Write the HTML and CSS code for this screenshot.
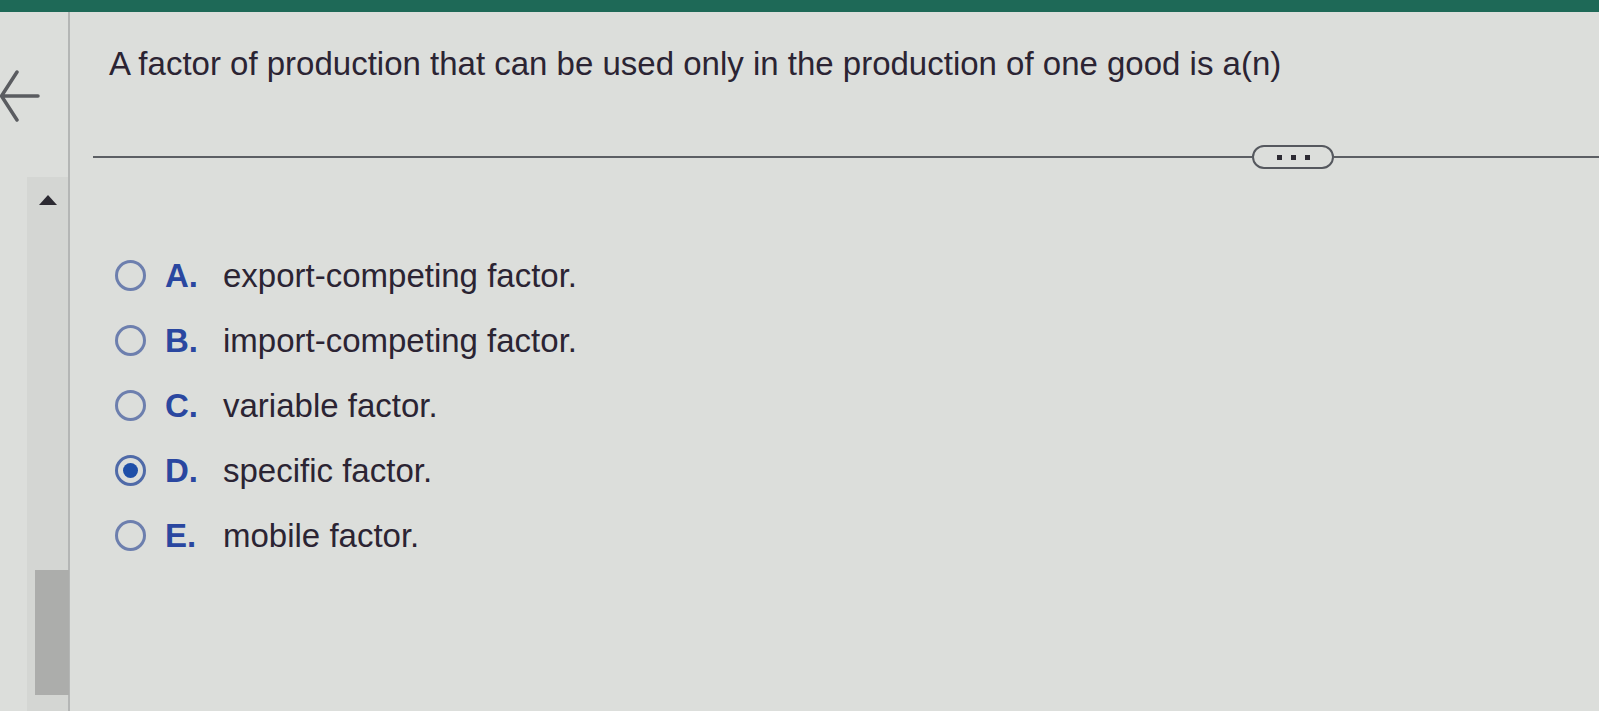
FILE: index.html
```html
<!DOCTYPE html>
<html lang="en">
<head>
<meta charset="utf-8">
<title>Question</title>
<link rel="stylesheet" href="styles.css">
</head>
<body>
<div class="topbar"></div>
<div class="main">
  <aside class="sidebar">
    <div class="back">
      <svg width="40" height="56" viewBox="0 0 40 56" aria-hidden="true">
        <path d="M38 27 H1.5 M17 3 L1.5 27 L17 51" fill="none" stroke="#5a5c60" stroke-width="3.5" stroke-linecap="round" stroke-linejoin="round"/>
      </svg>
    </div>
    <div class="track">
      <div class="up"></div>
      <div class="thumb"></div>
    </div>
  </aside>
  <section class="content">
    <h1 class="question">A factor of production that can be used only in the production of one good is a(n)</h1>
    <div class="divider">
      <span class="rule short"></span>
      <button class="more" aria-label="more"><span></span><span></span><span></span></button>
      <span class="rule long"></span>
    </div>
    <ul class="options">
      <li class="option"><span class="radio"></span><span class="letter">A.</span><span class="text">export-competing factor.</span></li>
      <li class="option"><span class="radio"></span><span class="letter">B.</span><span class="text">import-competing factor.</span></li>
      <li class="option"><span class="radio"></span><span class="letter">C.</span><span class="text">variable factor.</span></li>
      <li class="option"><span class="radio checked"></span><span class="letter">D.</span><span class="text">specific factor.</span></li>
      <li class="option"><span class="radio"></span><span class="letter">E.</span><span class="text">mobile factor.</span></li>
    </ul>
  </section>
</div>
</body>
</html>
```
FILE: styles.css
```css
* { box-sizing: border-box; }
html, body { margin: 0; padding: 0; }
body {
  width: 1599px;
  height: 711px;
  overflow: hidden;
  background: #dcdedb;
  font-family: "Liberation Sans", Arial, sans-serif;
  color: #2b2433;
}
.topbar {
  height: 12px;
  background: #1e6957;
}
.main {
  display: flex;
  height: 699px;
}
.sidebar {
  width: 70px;
  flex: none;
  border-right: 2px solid #b4b6b5;
  display: flex;
  flex-direction: column;
}
.back {
  height: 165px;
  padding-top: 57px;
}
.back svg { display: block; }
.track {
  flex: 1;
  margin-left: 27px;
  background: #d4d6d3;
  display: flex;
  flex-direction: column;
  align-items: center;
  padding-bottom: 16px;
}
.up {
  margin-top: 18px;
  width: 0;
  height: 0;
  border-left: 9px solid transparent;
  border-right: 9px solid transparent;
  border-bottom: 10px solid #2c2a32;
}
.thumb {
  margin-top: auto;
  width: 34px;
  margin-left: 8px;
  height: 125px;
  background: #acadab;
}
.content {
  flex: 1;
  padding-left: 39px;
}
.question {
  margin: 32px 0 0;
  font-size: 33px;
  font-weight: normal;
  line-height: 40px;
}
.divider {
  display: flex;
  align-items: center;
  margin: 61px 0 0 -16px;
  height: 24px;
}
.rule {
  height: 2px;
  background: #5c5f64;
}
.rule.short { width: 1159px; }
.rule.long { flex: 1; }
.more {
  width: 82px;
  height: 24px;
  border: 2px solid #55585e;
  border-radius: 12px;
  background: transparent;
  display: flex;
  justify-content: center;
  align-items: center;
  gap: 9px;
  padding: 0;
}
.more span {
  width: 5px;
  height: 5px;
  background: #2c2a32;
}
.options {
  list-style: none;
  margin: 74px 0 0;
  padding: 0;
}
.option {
  display: flex;
  align-items: center;
  height: 65px;
  font-size: 33px;
}
.radio {
  width: 31px;
  height: 31px;
  border: 3px solid #6d7fae;
  border-radius: 50%;
  margin-left: 6px;
  display: flex;
  align-items: center;
  justify-content: center;
}
.radio.checked {
  border-color: #4f6aa8;
}
.radio.checked::after {
  content: "";
  width: 15px;
  height: 15px;
  border-radius: 50%;
  background: #1f4fa8;
}
.letter {
  width: 58px;
  margin-left: 19px;
  font-weight: bold;
  color: #2a47a0;
}
.text {
  color: #2b2433;
}
```
